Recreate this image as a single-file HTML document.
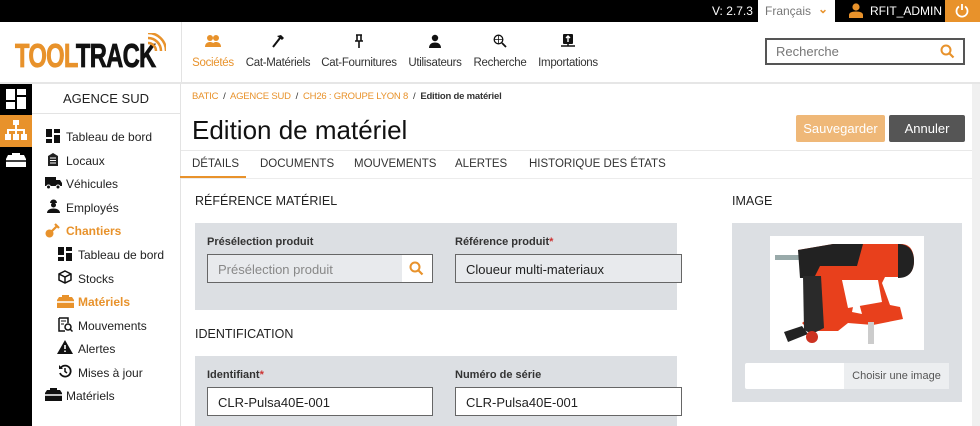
<!DOCTYPE html>
<html><head><meta charset="utf-8">
<style>
*{box-sizing:border-box;margin:0;padding:0}
body{width:980px;height:426px;overflow:hidden;font-family:"Liberation Sans",sans-serif;background:#fff;position:relative;color:#222}
.a{position:absolute}
.or{color:#e8922b}
.nav{position:absolute;top:34px;text-align:center;font-size:11.5px;color:#333;white-space:nowrap;letter-spacing:-0.3px}
.nav svg{display:block;margin:0 auto 9px}
.mi{position:absolute;font-size:12px;color:#222;white-space:nowrap}
.lbl{position:absolute;font-size:11px;font-weight:bold;color:#333}
.inp{position:absolute;height:29px;border:1px solid #666;background:#fff;font-size:13px;padding:7px 10px;color:#222}
.tab{position:absolute;top:158px;font-size:11.5px;color:#333;white-space:nowrap}
</style></head><body>
<!-- top bar -->
<div class="a" style="left:0;top:0;width:980px;height:22px;background:#000"></div>
<div class="a" style="left:712px;top:4px;color:#fff;font-size:12px">V: 2.7.3</div>
<div class="a" style="left:758px;top:0;width:77px;height:22px;background:#fff;font-size:12px;color:#777;padding:4px 7px">Français <span class="or" style="position:absolute;left:60px;top:2px;font-weight:bold">⌄</span></div>
<svg class="a" style="left:849px;top:3px" width="14" height="15" viewBox="0 0 14 15"><circle cx="7" cy="4" r="3.6" fill="#e8922b"/><path d="M0 15v-3c0-2 2-3.5 7-3.5s7 1.5 7 3.5v3z" fill="#e8922b"/></svg>
<div class="a" style="left:870px;top:4px;color:#fff;font-size:12px">RFIT_ADMIN</div>
<div class="a" style="left:945px;top:0;width:35px;height:22px;background:#e8922b"></div>
<svg class="a" style="left:955px;top:3px" width="14" height="15" viewBox="0 0 14 15"><path d="M4 3.5A5.5 5.5 0 1 0 10 3.5" fill="none" stroke="#fff" stroke-width="1.8"/><path d="M7 1v6" stroke="#fff" stroke-width="1.8"/></svg>
<!-- header -->
<div class="a" style="left:0;top:82px;width:980px;height:2px;background:#e6e6e6"></div>
<div class="a" style="left:181px;top:22px;width:1px;height:60px;background:#e3e3e3"></div>
<div class="a" style="left:15px;top:41px;font-size:33px;font-weight:bold;letter-spacing:-1px;transform:scaleX(0.72);transform-origin:left;line-height:30px;white-space:nowrap;-webkit-text-stroke:0.8px currentColor"><span class="or">TOOL</span><span style="color:#111">TRACK</span></div>
<svg class="a" style="left:146px;top:33px" width="20" height="20" viewBox="0 0 20 20"><g fill="none" stroke="#e8922b" stroke-width="2.5"><path d="M2 10a8 8 0 0 1 8 8"/><path d="M2 5a13 13 0 0 1 13 13"/><path d="M2 0a18 18 0 0 1 18 18"/></g></svg>
<div class="nav or" style="left:188px;width:50px"><svg width="18" height="14" viewBox="0 0 18 14"><circle cx="6" cy="4" r="3" fill="#e8922b"/><circle cx="12" cy="4" r="3" fill="#e8922b"/><path d="M1 13c0-4 3-5 5-5s5 1 5 5zM8 13c0-4 2-5 4-5s5 1 5 5z" fill="#e8922b"/></svg><span style="color:#e8922b">Sociétés</span></div>
<div class="nav" style="left:243px;width:70px"><svg width="16" height="14" viewBox="0 0 16 14"><path d="M3 13L10 4" stroke="#111" stroke-width="2"/><path d="M7 2l4-1 3 3-2 2z" fill="#111"/></svg>Cat-Matériels</div>
<div class="nav" style="left:319px;width:80px"><svg width="12" height="14" viewBox="0 0 12 14"><path d="M3 1h6M4 1v6M8 1v6M2 7h8M6 7v7" stroke="#111" stroke-width="1.6" fill="none"/></svg>Cat-Fournitures</div>
<div class="nav" style="left:405px;width:60px"><svg width="14" height="14" viewBox="0 0 14 14"><circle cx="7" cy="4" r="3.2" fill="#111"/><path d="M1 14c0-4 3-5.5 6-5.5s6 1.5 6 5.5z" fill="#111"/></svg>Utilisateurs</div>
<div class="nav" style="left:471px;width:58px"><svg width="14" height="14" viewBox="0 0 14 14"><circle cx="5.5" cy="5.5" r="4.3" fill="none" stroke="#111" stroke-width="1.3"/><path d="M1.5 5.5h8M5.5 1.5v8" stroke="#111" stroke-width=".8"/><path d="M9 9l4 4" stroke="#111" stroke-width="1.8"/></svg>Recherche</div>
<div class="nav" style="left:534px;width:68px"><svg width="16" height="14" viewBox="0 0 16 14"><rect x="3" y="0" width="10" height="10" rx="1" fill="#111"/><path d="M8 2v6M6 4l2-2 2 2" stroke="#fff" stroke-width="1.4" fill="none"/><path d="M1 12h14M8 10v2" stroke="#111" stroke-width="1.5"/></svg>Importations</div>
<div class="a" style="left:765px;top:38px;width:200px;height:27px;border:2px solid #555;font-size:13px;color:#777;padding:4px 9px">Recherche</div>
<svg class="a" style="left:940px;top:44px" width="15" height="15" viewBox="0 0 15 15"><circle cx="6" cy="6" r="4.5" fill="none" stroke="#e8922b" stroke-width="2"/><path d="M9.5 9.5l4 4" stroke="#e8922b" stroke-width="2.2"/></svg>
<!-- left strip -->
<div class="a" style="left:0;top:84px;width:32px;height:342px;background:#000"></div>
<div class="a" style="left:0;top:115px;width:32px;height:32px;background:#e8922b"></div>
<svg class="a" style="left:6px;top:89px" width="20" height="20" viewBox="0 0 20 20"><g fill="#fff"><rect x="0" y="0" width="9" height="11"/><rect x="11" y="0" width="9" height="6"/><rect x="0" y="13" width="9" height="7"/><rect x="11" y="8" width="9" height="12"/></g></svg>
<svg class="a" style="left:5px;top:120px" width="22" height="20" viewBox="0 0 22 20"><g fill="#fff"><rect x="8" y="0" width="6" height="5"/><rect x="0" y="14" width="6" height="6"/><rect x="8" y="14" width="6" height="6"/><rect x="16" y="14" width="6" height="6"/></g><path d="M11 5v9M3 14v-4h16v4" stroke="#fff" stroke-width="2" fill="none"/></svg>
<svg class="a" style="left:6px;top:152px" width="20" height="16" viewBox="0 0 20 16"><path d="M6 3V1h8v2h4l2 4v8H0V7l2-4z" fill="#fff"/><path d="M0 9h20" stroke="#000" stroke-width="1.5"/></svg>
<!-- sidebar -->
<div class="a" style="left:180px;top:84px;width:1px;height:342px;background:#e3e3e3"></div>
<div class="a" style="left:32px;top:91px;width:148px;text-align:center;font-size:13px;color:#222">AGENCE SUD</div>
<div class="a" style="left:32px;top:113px;width:148px;height:1px;background:#e3e3e3"></div>
<svg class="a" style="left:46px;top:129px" width="14" height="14" viewBox="0 0 14 14"><g fill="#111"><rect width="6" height="8"/><rect x="8" width="6" height="4"/><rect y="10" width="6" height="4"/><rect x="8" y="6" width="6" height="8"/></g></svg>
<div class="mi" style="left:66px;top:130px">Tableau de bord</div>
<svg class="a" style="left:47px;top:153px" width="12" height="13" viewBox="0 0 12 13"><path d="M1 13V3l5-3 5 3v10z" fill="#222"/><path d="M3 5h6M3 7.5h6M3 10h6" stroke="#fff"/></svg>
<div class="mi" style="left:66px;top:154px">Locaux</div>
<svg class="a" style="left:45px;top:177px" width="17" height="12" viewBox="0 0 17 12"><path d="M0 0h11v9H0zM11 3h4l2 3v3h-6z" fill="#111"/><circle cx="3.5" cy="10" r="2" fill="#111" stroke="#fff"/><circle cx="13" cy="10" r="2" fill="#111" stroke="#fff"/></svg>
<div class="mi" style="left:66px;top:177px">Véhicules</div>
<svg class="a" style="left:47px;top:199px" width="13" height="14" viewBox="0 0 13 14"><path d="M3 4a3.5 3.5 0 0 1 7 0z" fill="#111"/><circle cx="6.5" cy="6" r="2.5" fill="#111"/><path d="M0 14c0-3 3-4.5 6.5-4.5S13 11 13 14z" fill="#111"/></svg>
<div class="mi" style="left:66px;top:201px">Employés</div>
<svg class="a" style="left:45px;top:222px" width="16" height="16" viewBox="0 0 16 16"><circle cx="4.5" cy="11.5" r="4" fill="#e8922b"/><path d="M6 10l6-6M10 2l4 4" stroke="#e8922b" stroke-width="2.2"/></svg>
<div class="mi" style="left:66px;top:224px;color:#e8922b;font-weight:bold">Chantiers</div>
<svg class="a" style="left:58px;top:247px" width="14" height="14" viewBox="0 0 14 14"><g fill="#111"><rect width="6" height="8"/><rect x="8" width="6" height="4"/><rect y="10" width="6" height="4"/><rect x="8" y="6" width="6" height="8"/></g></svg>
<div class="mi" style="left:78px;top:248px">Tableau de bord</div>
<svg class="a" style="left:58px;top:270px" width="14" height="14" viewBox="0 0 14 14"><path d="M7 1l6 3v6l-6 3-6-3V4zM1 4l6 3 6-3M7 7v6" fill="none" stroke="#111" stroke-width="1.5"/></svg>
<div class="mi" style="left:78px;top:272px">Stocks</div>
<svg class="a" style="left:57px;top:294px" width="17" height="14" viewBox="0 0 17 14"><path d="M5 3V1h7v2h3l2 3v8H0V6l2-3z" fill="#e8922b"/><path d="M0 8h17" stroke="#fff" stroke-width="1.5"/></svg>
<div class="mi" style="left:78px;top:295px;color:#e8922b;font-weight:bold">Matériels</div>
<svg class="a" style="left:58px;top:317px" width="15" height="15" viewBox="0 0 15 15"><path d="M1 1h9v5M1 1v13h6" fill="none" stroke="#111" stroke-width="1.5"/><path d="M3 4h5M3 7h3" stroke="#111"/><circle cx="10" cy="10" r="3" fill="none" stroke="#111" stroke-width="1.5"/><path d="M12 12l2.5 2.5" stroke="#111" stroke-width="1.5"/></svg>
<div class="mi" style="left:78px;top:319px">Mouvements</div>
<svg class="a" style="left:57px;top:340px" width="16" height="14" viewBox="0 0 16 14"><path d="M8 0l8 14H0z" fill="#111"/><path d="M8 5v4M8 10.5v1.5" stroke="#fff" stroke-width="1.6"/></svg>
<div class="mi" style="left:78px;top:342px">Alertes</div>
<svg class="a" style="left:58px;top:364px" width="14" height="14" viewBox="0 0 14 14"><path d="M3 3.5A5.5 5.5 0 1 1 2 9" fill="none" stroke="#111" stroke-width="1.8"/><path d="M1 1v4h4" fill="#111"/><path d="M7 4v3.5l2 1.5" stroke="#111" stroke-width="1.5" fill="none"/></svg>
<div class="mi" style="left:78px;top:366px">Mises à jour</div>
<svg class="a" style="left:45px;top:387px" width="17" height="14" viewBox="0 0 17 14"><path d="M5 3V1h7v2h3l2 3v8H0V6l2-3z" fill="#111"/><path d="M0 8h17" stroke="#fff" stroke-width="1.5"/></svg>
<div class="mi" style="left:66px;top:389px">Matériels</div>
<!-- main -->
<div class="a" style="left:972px;top:84px;width:8px;height:342px;background:#f0f0f0"></div>
<div class="a" style="left:192px;top:91px;font-size:9.5px;color:#333;white-space:nowrap;letter-spacing:-0.2px"><span class="or">BATIC</span> &nbsp;/&nbsp; <span class="or">AGENCE SUD</span> &nbsp;/&nbsp; <span class="or">CH26 : GROUPE LYON 8</span> &nbsp;/&nbsp; <b>Edition de matériel</b></div>
<div class="a" style="left:192px;top:115px;font-size:26px;color:#111">Edition de matériel</div>
<div class="a" style="left:796px;top:115px;width:89px;height:27px;background:#efb878;border-radius:2px;color:#fff;font-size:13px;text-align:center;line-height:27px">Sauvegarder</div>
<div class="a" style="left:889px;top:115px;width:76px;height:27px;background:#555;border-radius:2px;color:#fff;font-size:13px;text-align:center;line-height:27px">Annuler</div>
<div class="a" style="left:181px;top:150px;width:791px;height:1px;background:#e8e8e8"></div>
<div class="tab or" style="left:192px">DÉTAILS</div>
<div class="tab" style="left:260px">DOCUMENTS</div>
<div class="tab" style="left:354px">MOUVEMENTS</div>
<div class="tab" style="left:455px">ALERTES</div>
<div class="tab" style="left:529px">HISTORIQUE DES ÉTATS</div>
<div class="a" style="left:181px;top:178px;width:791px;height:1px;background:#ececec"></div>
<div class="a" style="left:180px;top:176px;width:66px;height:2px;background:#e8922b"></div>
<div class="a" style="left:195px;top:194px;font-size:12.5px;color:#222">RÉFÉRENCE MATÉRIEL</div>
<div class="a" style="left:195px;top:223px;width:482px;height:87px;background:#dcdfe3"></div>
<div class="lbl" style="left:207px;top:236px">Présélection produit</div>
<div class="lbl" style="left:455px;top:236px">Référence produit<span style="color:#c33">*</span></div>
<div class="inp" style="left:207px;top:254px;width:226px;background:#e8eaed;color:#888">Présélection produit</div>
<div class="a" style="left:402px;top:255px;width:30px;height:27px;background:#fff"></div>
<svg class="a" style="left:409px;top:261px" width="15" height="15" viewBox="0 0 15 15"><circle cx="6" cy="6" r="4.5" fill="none" stroke="#e8922b" stroke-width="2"/><path d="M9.5 9.5l4 4" stroke="#e8922b" stroke-width="2.2"/></svg>
<div class="inp" style="left:455px;top:254px;width:227px;background:#e8eaed">Cloueur multi-materiaux</div>
<div class="a" style="left:195px;top:327px;font-size:12.5px;color:#222">IDENTIFICATION</div>
<div class="a" style="left:195px;top:356px;width:482px;height:70px;background:#dcdfe3"></div>
<div class="lbl" style="left:207px;top:369px">Identifiant<span style="color:#c33">*</span></div>
<div class="lbl" style="left:455px;top:369px">Numéro de série</div>
<div class="inp" style="left:207px;top:387px;width:226px">CLR-Pulsa40E-001</div>
<div class="inp" style="left:455px;top:387px;width:227px">CLR-Pulsa40E-001</div>
<div class="a" style="left:732px;top:194px;font-size:12.5px;color:#222">IMAGE</div>
<div class="a" style="left:732px;top:223px;width:230px;height:179px;background:#dcdfe3"></div>
<div class="a" style="left:770px;top:236px;width:154px;height:114px;background:#fff"></div>
<svg class="a" style="left:770px;top:236px" width="154" height="114" viewBox="0 0 154 114">
<rect x="5" y="19" width="26" height="5" fill="#9aa"/>
<path d="M28 14l35-6h68c10 0 13 8 13 17s-4 16-13 16H125l-10 0-3 6 8 22 10 2 3 12-30 6-25-2-10 8H40l-8-8 8-6 0-50z" fill="#e8401c"/>
<path d="M28 14l35-6h30l-6 22H50l-6 12h-14z" fill="#222"/>
<path d="M128 8c12 0 16 8 16 17s-4 17-16 17z" fill="#222"/>
<path d="M33 40h18l3 52-12 6-8-4z" fill="#2a2a2a"/>
<path d="M14 96l18-6 6 8-20 8z" fill="#222"/>
<circle cx="42" cy="101" r="6" fill="#c32"/>
<path d="M72 44h36l4 22-34 6z" fill="#fff"/>
<path d="M86 56l6 22-10-2z" fill="#fff"/>
<rect x="98" y="86" width="6" height="22" fill="#ccc"/>
</svg>
<div class="a" style="left:745px;top:363px;width:204px;height:26px;background:#fff;border-radius:2px"></div>
<div class="a" style="left:844px;top:363px;width:105px;height:26px;background:#eceef0;font-size:11px;color:#555;text-align:center;line-height:26px">Choisir une image</div>
</body></html>
